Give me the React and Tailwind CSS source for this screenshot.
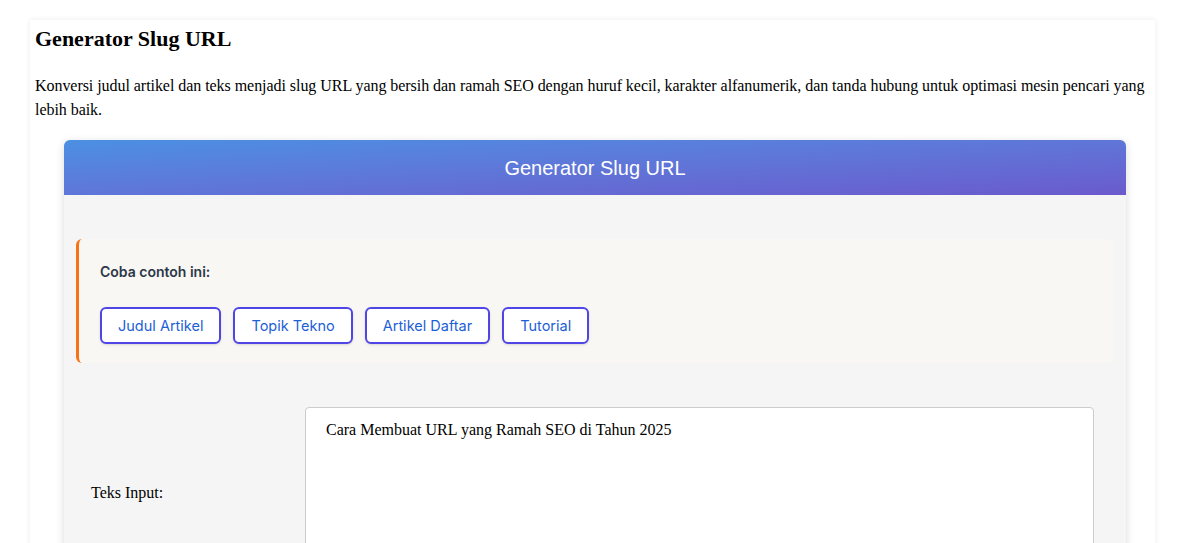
export default function App() {
  const examples = ['Judul Artikel', 'Topik Tekno', 'Artikel Daftar', 'Tutorial'];
  return (
    <div className="bg-white min-h-[900px] pt-5 pl-[30px] pr-[45px]" style={{ fontFamily: '"Liberation Serif", serif' }}>
      <div className="bg-white shadow-[0_0_6px_rgba(0,0,0,0.08)] pl-[5px] pr-[1px] pb-10">
        <h1 className="text-[22px] font-bold pt-[6px] leading-[26px] text-black">Generator Slug URL</h1>
        <p className="mt-[22px] text-[16px] leading-[24px] text-black tracking-[-0.05px]">
          Konversi judul artikel dan teks menjadi slug URL yang bersih dan ramah SEO dengan huruf kecil, karakter alfanumerik, dan tanda hubung untuk optimasi mesin pencari yang lebih baik.
        </p>
        <div className="ml-[29px] mr-[28px] mt-[18px] rounded-md overflow-hidden shadow-[0_2px_8px_rgba(0,0,0,0.15)] bg-[#f5f5f5]">
          <div className="h-[55px] flex items-center justify-center bg-gradient-to-br from-[#4a90e2] to-[#6a5acd] text-white text-[20px]" style={{ fontFamily: '"Liberation Sans", sans-serif' }}>
            Generator Slug URL
          </div>
          <div className="px-3 pt-11 pb-10">
            <div className="bg-[#f8f7f3] border-l-[3px] border-[#f97316] rounded-md pl-[21px] pt-[22px] pb-[19px]" style={{ fontFamily: 'Inter, sans-serif' }}>
              <div className="text-[14px] font-semibold text-[#2d3748]">Coba contoh ini:</div>
              <div className="flex gap-3 mt-[25px]">
                {examples.map((e) => (
                  <button key={e} className="h-[37px] px-[16px] border-2 border-[#4f46e5] rounded-md bg-white text-[14.5px] text-[#1d5fd6] shadow-sm">
                    {e}
                  </button>
                ))}
              </div>
            </div>
            <div className="flex mt-[44px]">
              <div className="w-[229px] pl-[15px] flex items-center text-[16px] text-black h-[172px]">Teks Input:</div>
              <div className="flex-1 mr-[20px] h-[200px] bg-white border border-[#ccc] rounded px-5 py-[10px] text-[16px] text-black">
                Cara Membuat URL yang Ramah SEO di Tahun 2025
              </div>
            </div>
          </div>
        </div>
      </div>
    </div>
  );
}
